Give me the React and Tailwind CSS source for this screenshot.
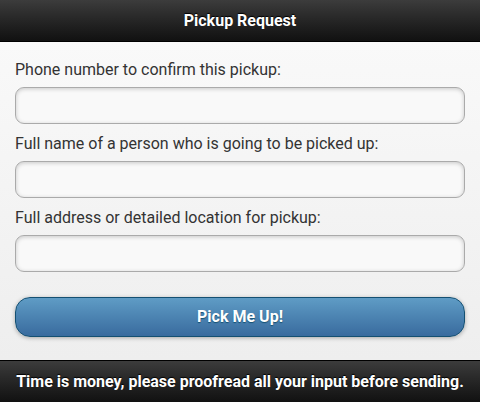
import React from "react";

function Field({ label }) {
  return (
    <div className="mb-[9px]">
      <label className="block text-[16px] leading-[22px] text-[#333] mb-[6px]">{label}</label>
      <input
        type="text"
        className="block w-full h-[37px] rounded-[9px] border border-[#aaa] bg-[#f9f9f9] shadow-[inset_0_1px_4px_rgba(0,0,0,0.2)] outline-none px-2"
      />
    </div>
  );
}

export default function App() {
  return (
    <div className="w-[480px] h-[402px] flex flex-col font-['Roboto',sans-serif] overflow-hidden">
      {/* Header */}
      <div className="h-[42px] shrink-0 flex items-center justify-center bg-gradient-to-b from-[#3c3c3c] to-[#111] border-b border-[#000]">
        <h1 className="text-white font-bold text-[16px] [text-shadow:0_-1px_1px_#000]">Pickup Request</h1>
      </div>

      {/* Content */}
      <div className="flex-1 bg-gradient-to-b from-[#f9f9f9] to-[#eee] px-[15px] pt-[17px]">
        <Field label="Phone number to confirm this pickup:" />
        <Field label="Full name of a person who is going to be picked up:" />
        <Field label="Full address or detailed location for pickup:" />
        <button className="mt-[16px] w-full h-[40px] rounded-[15px] border border-[#145072] bg-gradient-to-b from-[#5f9cc5] to-[#396b9e] text-white font-bold text-[16px] [text-shadow:0_1px_1px_#145072] shadow-[0_1px_4px_rgba(0,0,0,0.3)]">
          Pick Me Up!
        </button>
      </div>

      {/* Footer */}
      <div className="h-[42px] shrink-0 flex items-center justify-center bg-gradient-to-b from-[#3c3c3c] to-[#111] border-t border-[#000]">
        <p className="text-white font-bold text-[16px] [text-shadow:0_-1px_1px_#000]">
          Time is money, please proofread all your input before sending.
        </p>
      </div>
    </div>
  );
}
